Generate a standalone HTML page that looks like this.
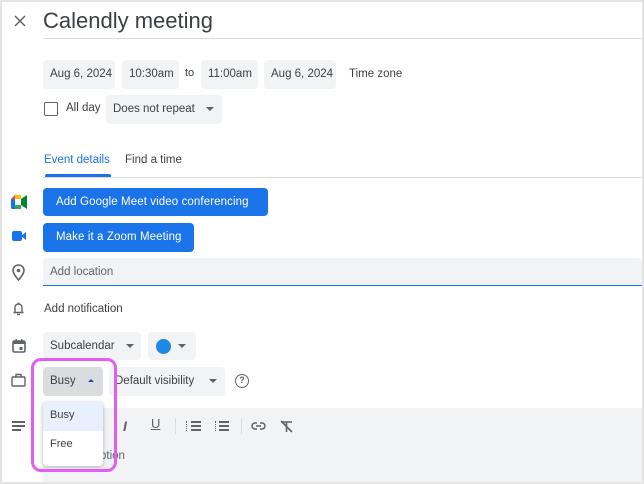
<!DOCTYPE html><html><head><style>
*{box-sizing:border-box;margin:0;padding:0}
body{width:644px;height:484px;background:#e4e4e4;font-family:"Liberation Sans",Arial,sans-serif;color:#3c4043;position:relative;overflow:hidden}
#p{position:absolute;left:2px;top:2px;width:640px;height:480px;background:#fff}
.a{position:absolute}
.chip{position:absolute;background:#f1f3f4;border-radius:4px;font-size:11.5px;line-height:29px;padding-left:7px;color:#3c4043}
.btn{position:absolute;background:#1a73e8;color:#fff;border-radius:4px;font-size:11.5px;line-height:29px;padding-left:13px;letter-spacing:.1px}
.car{position:absolute;width:0;height:0;border-left:4px solid transparent;border-right:4px solid transparent;border-top:4px solid #5f6368}
</style></head><body><div id="p"></div>
<svg class="a" style="left:14px;top:15px" width="12" height="12"><path d="M1 1L11 11M11 1L1 11" stroke="#5f6368" stroke-width="1.5"/></svg>
<div class="a" style="left:43px;top:8px;font-size:22px;color:#3c4043">Calendly meeting</div>
<div class="a" style="left:43px;top:38px;width:599px;height:1px;background:#dadce0"></div>
<div class="chip" style="left:43px;top:60px;width:72px;height:29px">Aug 6, 2024</div>
<div class="chip" style="left:122px;top:60px;width:57px;height:29px">10:30am</div>
<div class="a" style="left:185px;top:67px;font-size:11px">to</div>
<div class="chip" style="left:201px;top:60px;width:57px;height:29px">11:00am</div>
<div class="chip" style="left:264px;top:60px;width:72px;height:29px">Aug 6, 2024</div>
<div class="a" style="left:349px;top:68px;font-size:11.5px">Time zone</div>
<div class="a" style="left:44px;top:102px;width:14px;height:14px;border:1.5px solid #5f6368;border-radius:2px"></div>
<div class="a" style="left:66px;top:102px;font-size:11.5px">All day</div>
<div class="chip" style="left:106px;top:95px;width:116px;height:29px">Does not repeat</div>
<div class="car" style="left:206px;top:107px"></div>
<div class="a" style="left:44px;top:154px;font-size:11.5px;color:#1a73e8">Event details</div>
<div class="a" style="left:125px;top:154px;font-size:11.5px">Find a time</div>
<div class="a" style="left:43px;top:177px;width:599px;height:1px;background:#dadce0"></div>
<div class="a" style="left:45px;top:174px;width:66px;height:3px;background:#1a73e8;border-radius:2px 2px 0 0"></div>
<svg class="a" style="left:11px;top:195px" width="16" height="14" viewBox="0 0 16 14"><path d="M0 4L4 0V4Z" fill="#ea4335"/><path d="M0 4H4V10H0Z" fill="#1a73e8"/><path d="M4 0H10V4H4Z" fill="#fbbc04"/><path d="M0 10H4V14H1.5Q0 14 0 12.5Z" fill="#1a73e8"/><path d="M4 10H10V14H4Z" fill="#34a853"/><path d="M10 4V10L16 14V0L10 4Z" fill="#00832d"/></svg>
<div class="btn" style="left:43px;top:188px;width:225px;height:28px;line-height:28px">Add Google Meet video conferencing</div>
<svg class="a" style="left:12px;top:231px" width="14" height="10"><rect x="0" y="0" width="10" height="10" rx="2" fill="#1a73e8"/><path d="M9 5L14 1V9Z" fill="#1a73e8"/></svg>
<div class="btn" style="left:43px;top:223px;width:151px;height:29px">Make it a Zoom Meeting</div>
<svg class="a" style="left:12px;top:264px" width="13" height="17" viewBox="0 0 13 17"><path d="M6.5 16C3 12 1 9 1 6.5A5.5 5.5 0 0 1 12 6.5C12 9 10 12 6.5 16Z" fill="none" stroke="#5f6368" stroke-width="1.6"/><circle cx="6.5" cy="6.5" r="1.8" fill="#5f6368"/></svg>
<div class="a" style="left:43px;top:258px;width:599px;height:28px;background:#f1f3f4;border-radius:4px 4px 0 0"></div>
<div class="a" style="left:43px;top:285px;width:599px;height:1px;background:#1a73e8"></div>
<div class="a" style="left:50px;top:266px;font-size:11.5px;color:#5f6368">Add location</div>
<svg class="a" style="left:12px;top:301px" width="13" height="15" viewBox="0 0 13 15"><path d="M3 11V6.5A3.5 3.5 0 0 1 10 6.5V11M1.5 11.5H11.5M6.5 1.5V3M5 13.5H8" fill="none" stroke="#5f6368" stroke-width="1.4"/></svg>
<div class="a" style="left:44px;top:303px;font-size:11.5px">Add notification</div>
<svg class="a" style="left:12px;top:339px" width="14" height="14" viewBox="0 0 14 14"><rect x="1" y="2" width="12" height="11" rx="1.5" fill="none" stroke="#5f6368" stroke-width="1.6"/><rect x="1" y="2" width="12" height="3" fill="#5f6368"/><rect x="3.5" y="0" width="1.5" height="3" fill="#5f6368"/><rect x="9" y="0" width="1.5" height="3" fill="#5f6368"/><rect x="7.5" y="8" width="3" height="3" fill="#5f6368"/></svg>
<div class="chip" style="left:43px;top:332px;width:98px;height:28px">Subcalendar</div>
<div class="car" style="left:126px;top:344px"></div>
<div class="chip" style="left:148px;top:332px;width:48px;height:28px"></div>
<div class="a" style="left:156px;top:339px;width:15px;height:15px;border-radius:50%;background:#1e88e5"></div>
<div class="car" style="left:178px;top:344px"></div>
<svg class="a" style="left:11px;top:373px" width="15" height="14" viewBox="0 0 15 14"><rect x="1" y="4" width="13" height="9" rx="1" fill="none" stroke="#5f6368" stroke-width="1.4"/><path d="M5 4V1.5H10V4" fill="none" stroke="#5f6368" stroke-width="1.4"/></svg>
<div class="chip" style="left:43px;top:367px;width:60px;height:29px;background:#dadce0">Busy</div>
<div class="a" style="left:88px;top:379px;width:0;height:0;border-left:3px solid transparent;border-right:3px solid transparent;border-bottom:3px solid #1a4f9c"></div>
<div class="chip" style="left:109px;top:367px;width:116px;height:29px;padding-left:6px">Default visibility</div>
<div class="car" style="left:209px;top:379px"></div>
<div class="a" style="left:235px;top:374px;width:14px;height:14px;border:1.5px solid #5f6368;border-radius:50%;font-size:9px;font-weight:bold;text-align:center;line-height:11px;color:#5f6368">?</div>
<div class="a" style="left:12px;top:421px;width:13px;height:1.5px;background:#5f6368"></div>
<div class="a" style="left:12px;top:425px;width:13px;height:1.5px;background:#5f6368"></div>
<div class="a" style="left:12px;top:429px;width:9px;height:1.5px;background:#5f6368"></div>
<div class="a" style="left:43px;top:408px;width:599px;height:74px;background:#f1f3f4"></div>
<div class="a" style="left:123px;top:418px;font-size:14px;font-style:italic;font-weight:bold;color:#5f6368">I</div>
<div class="a" style="left:151px;top:416px;font-size:13px;text-decoration:underline;color:#5f6368">U</div>
<div class="a" style="left:175px;top:418px;width:1px;height:16px;background:#dadce0"></div>
<div class="a" style="left:191px;top:421px;width:10px;height:1.5px;background:#5f6368;box-shadow:0 4px 0 #5f6368,0 8px 0 #5f6368"></div>
<div class="a" style="left:186px;top:421px;width:2px;height:10px;border-left:1.5px dotted #5f6368"></div>
<div class="a" style="left:219px;top:421px;width:10px;height:1.5px;background:#5f6368;box-shadow:0 4px 0 #5f6368,0 8px 0 #5f6368"></div>
<div class="a" style="left:215px;top:421px;width:2px;height:10px;border-left:1.5px dotted #5f6368"></div>
<div class="a" style="left:241px;top:418px;width:1px;height:16px;background:#dadce0"></div>
<svg class="a" style="left:251px;top:421px" width="15" height="10" viewBox="0 0 15 10"><path d="M6 2H4A3 3 0 0 0 4 8H6M9 2H11A3 3 0 0 1 11 8H9M5 5H10" fill="none" stroke="#5f6368" stroke-width="1.5"/></svg>
<svg class="a" style="left:280px;top:420px" width="13" height="13" viewBox="0 0 13 13"><path d="M1 2H12M6.5 2V12M1 1L12 12" fill="none" stroke="#5f6368" stroke-width="1.6"/></svg>
<div class="a" style="left:100px;top:450px;font-size:11.5px;color:#5f6368">ption</div>
<div class="a" style="left:43px;top:402px;width:60px;height:64px;background:#fff;border-radius:4px;box-shadow:0 1px 4px rgba(0,0,0,.3)"></div>
<div class="a" style="left:43px;top:402px;width:60px;height:29px;background:#e8f0fe"></div>
<div class="a" style="left:50px;top:409px;font-size:11px">Busy</div>
<div class="a" style="left:50px;top:438px;font-size:11px">Free</div>
<div class="a" style="left:31px;top:358px;width:86px;height:114px;border:3px solid #e55cf5;border-radius:10px"></div>
</body></html>
